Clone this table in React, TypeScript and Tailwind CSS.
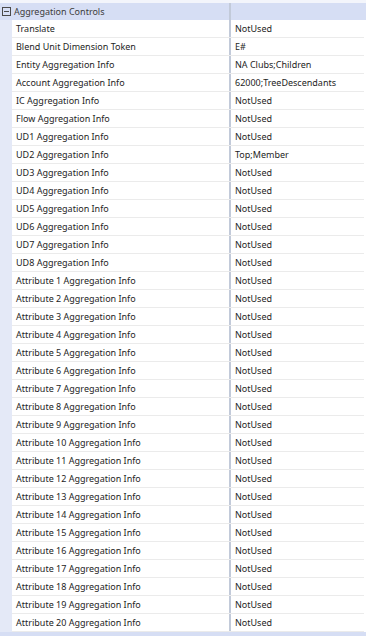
import React from 'react';

const rows: [string, string][] = [
  ['Translate', 'NotUsed'],
  ['Blend Unit Dimension Token', 'E#'],
  ['Entity Aggregation Info', 'NA Clubs;Children'],
  ['Account Aggregation Info', '62000;TreeDescendants'],
  ['IC Aggregation Info', 'NotUsed'],
  ['Flow Aggregation Info', 'NotUsed'],
  ['UD1 Aggregation Info', 'NotUsed'],
  ['UD2 Aggregation Info', 'Top;Member'],
  ['UD3 Aggregation Info', 'NotUsed'],
  ['UD4 Aggregation Info', 'NotUsed'],
  ['UD5 Aggregation Info', 'NotUsed'],
  ['UD6 Aggregation Info', 'NotUsed'],
  ['UD7 Aggregation Info', 'NotUsed'],
  ['UD8 Aggregation Info', 'NotUsed'],
  ...Array.from({ length: 20 }, (_, i) => [`Attribute ${i + 1} Aggregation Info`, 'NotUsed'] as [string, string]),
];

export default function App() {
  return (
    <div className="w-[366px] h-[636px] overflow-hidden bg-[#d6def4] text-[9px] text-[#1e1e1e]" style={{ fontFamily: '"Noto Sans", sans-serif' }}>
      <div className="h-[3px] bg-[#f3f5fb]" />
      {/* category header */}
      <div className="flex h-[17px] items-center bg-[#d6def4]">
        <div className="flex w-[13px] justify-center">
          <svg width="9" height="9" viewBox="0 0 9 9">
            <rect x="0.5" y="0.5" width="8" height="8" fill="none" stroke="#4a4a4a" />
            <line x1="2" y1="4.5" x2="7" y2="4.5" stroke="#4a4a4a" />
          </svg>
        </div>
        <div className="w-[216px] pl-[1px] text-[#3c3c3c]">Aggregation Controls</div>
        <div className="h-full w-[2px] bg-[#c2cad9]" />
        <div className="flex-1" />
      </div>
      <div className="flex">
        <div className="w-[12px] bg-[#e4e9f7]" />
        <div className="flex flex-1 flex-col bg-white pr-[2px]">
          {rows.map(([k, v]) => (
            <div key={k} className="flex h-[18px] items-center border-b border-[#ebebeb]">
              <div className="w-[217px] truncate pl-[4px]">{k}</div>
              <div className="h-full w-[2px] bg-[#c2cad9]" />
              <div className="flex-1 truncate pl-[4px]">{v}</div>
            </div>
          ))}
        </div>
      </div>
    </div>
  );
}
